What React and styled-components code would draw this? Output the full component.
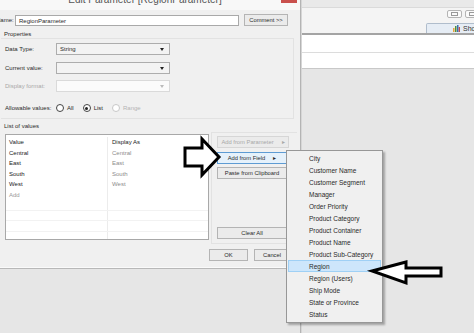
import styled, { createGlobalStyle } from "styled-components";

const Global = createGlobalStyle`
body{
    margin:0;
    background:#e6e6e6;
    font-family:"Liberation Sans", Arial, sans-serif;
}
`

const Page = styled.div`
position:relative;
display:flex;
width:474px;
height:333px;
overflow:hidden;
background:#e6e6e6;
`
const LeftCol = styled.div`
width:300px;
display:flex;
flex-direction:column;
border-right:1px solid #b4b4b4;
box-shadow:1px 0 0 #d6d6d6;
`
const Dialog = styled.div`
height:268px;
background:#f0f0f0;
border-bottom:1px solid #b8b8b8;
box-shadow:0 -4px 0 -3px #fafafa inset;
display:flex;
flex-direction:column;
font-size:6px;
color:#2a2a2a;
`
const TitleBar = styled.div`
position:relative;
height:10px;
background:#f8f8f8;
overflow:hidden;
display:flex;
justify-content:center;
span{
    margin-top:-6px;
    margin-right:10px;
    font-size:10px;
    line-height:12px;
    color:#555;
}
`
const CloseBtn = styled.div`
position:absolute;
right:3px;
top:0;
width:16px;
height:3px;
background:#c9504d;
`
const NameRow = styled.div`
display:flex;
align-items:center;
height:12px;
margin-top:4px;
label{
    width:19px;
    margin-left:-4px;
}
`
const TextInput = styled.div`
width:224px;
height:11px;
background:#fff;
border:1px solid #a9a9a9;
box-sizing:border-box;
padding-left:3px;
line-height:10px;
`
const Button = styled.div`
box-sizing:border-box;
width:${p => p.w || 71}px;
height:12px;
display:flex;
align-items:center;
justify-content:center;
gap:8px;
background:${p => p.hot ? "#e5f1fb" : "#ebebeb"};
border:1px solid ${p => p.hot ? "#5d9bd3" : p.off ? "#d6d6d6" : "#b4b4b4"};
color:${p => p.off ? "#a8a8a8" : "#2a2a2a"};
font-size:5.8px;
white-space:nowrap;
`
const GroupLabel = styled.div`
height:8px;
line-height:8px;
padding-left:4px;
margin-top:${p => p.mt}px;
`
const PropsBox = styled.div`
margin:0 6px 0 1px;
height:81px;
box-sizing:border-box;
border:1px solid #e2e2e2;
border-left:none;
padding:4px 0 0 4px;
display:flex;
flex-direction:column;
gap:6.5px;
`
const FieldRow = styled.div`
display:flex;
align-items:center;
height:12px;
margin-top:${p => p.mt || 0}px;
color:${p => p.off ? "#a8a8a8" : "#2a2a2a"};
label{ width:51px; }
`
const Select = styled.div`
position:relative;
box-sizing:border-box;
width:114px;
height:12px;
background:${p => p.off ? "#fbfbfb" : "#f3f3f3"};
border:1px solid ${p => p.off ? "#dadada" : "#adadad"};
padding-left:3px;
line-height:10px;
color:#2a2a2a;
&::after{
    content:"";
    position:absolute;
    right:5px;
    top:4px;
    border-left:2px solid transparent;
    border-right:2px solid transparent;
    border-top:3px solid ${p => p.off ? "#bbb" : "#222"};
}
`
const Radio = styled.span`
display:inline-flex;
align-items:center;
gap:3px;
margin-right:9px;
color:${p => p.off ? "#b4b4b4" : "#2a2a2a"};
i{
    width:6px;
    height:6px;
    border-radius:50%;
    border:1px solid ${p => p.off ? "#c8c8c8" : "#444"};
    background:#fff;
    display:flex;
    align-items:center;
    justify-content:center;
}
i b{
    width:3px;
    height:3px;
    border-radius:50%;
    background:#222;
}
`
const ListArea = styled.div`
display:flex;
margin-top:2px;
height:112px;
`
const ListBox = styled.div`
margin:2px 0 0 5px;
width:204px;
height:106px;
box-sizing:border-box;
background:#fff;
border:1px solid #a8a8a8;
padding-top:2px;
overflow:hidden;
`
const ListRow = styled.div`
display:grid;
grid-template-columns:101px 1fr;
height:10.5px;
line-height:10.5px;
box-sizing:border-box;
border-bottom:1px solid ${p => p.empty ? "#f2f2f2" : "transparent"};
span{ padding-left:3px; color:${p => p.dim ? "#9a9a9a" : "#1a1a1a"}; }
span + span{ border-left:1px solid #ececec; padding-left:4px; color:${p => p.head ? "#1a1a1a" : "#8c8c8c"}; }
`
const SidePanel = styled.div`
margin-left:2px;
width:86px;
box-sizing:border-box;
border:1px solid #e2e2e2;
border-right:none;
padding:3px 0 0 5px;
display:flex;
flex-direction:column;
gap:3.5px;
`
const Footer = styled.div`
display:flex;
justify-content:flex-end;
gap:6px;
margin-top:5px;
padding-right:10px;
`
const RightPane = styled.div`
flex:1;
display:flex;
flex-direction:column;
margin-left:1px;
`
const TopStrip = styled.div`
height:7px;
background:#e9e9e9;
border-bottom:1px solid #dadada;
`
const ToolArea = styled.div`
height:25px;
background:#f4f4f4;
border-bottom:2px solid #a4a4a4;
display:flex;
flex-direction:column;
align-items:flex-end;
`
const MiniBtns = styled.div`
display:flex;
gap:3px;
margin:2px -6px 0 0;
div{
    width:13px;
    height:6px;
    border:1px solid #b4b4b4;
    border-radius:2px;
    background:#fafafa;
    display:flex;
    align-items:center;
    justify-content:center;
}
div b{
    width:5px;
    height:2px;
    border:1px solid #999;
}
`
const Tab = styled.div`
margin:5px -12px 0 0;
width:60px;
height:12px;
box-sizing:border-box;
background:#e6edf5;
border:1px solid #b0bdcc;
border-bottom:none;
border-radius:2px 2px 0 0;
display:flex;
align-items:center;
gap:3px;
padding-left:26px;
font-size:7px;
color:#333;
`
const WhiteRow = styled.div`
height:${p => p.h}px;
background:#fff;
border-bottom:1px solid ${p => p.line};
`
const Menu = styled.div`
position:absolute;
left:286px;
top:150px;
width:97px;
box-sizing:border-box;
padding:1px 1px 2px;
background:#f0f0f0;
border:1px solid #979797;
box-shadow:2px 2px 2px rgba(0,0,0,0.3);
font-size:6.5px;
color:#2a2a2a;
`
const MenuItem = styled.div`
height:12px;
line-height:11px;
box-sizing:border-box;
padding-left:20px;
background:${p => p.sel ? "#cde6fb" : "transparent"};
border:1px solid ${p => p.sel ? "#9fd0f5" : "transparent"};
`
const Overlay = styled.svg`
position:absolute;
left:0;
top:0;
pointer-events:none;
`

const fields = ["City","Customer Name","Customer Segment","Manager","Order Priority","Product Category","Product Container","Product Name","Product Sub-Category","Region","Region (Users)","Ship Mode","State or Province","Status"]
const values = ["Central","East","South","West"]

const App = () => {
    return (
        <Page>
            <Global />
            <LeftCol>
                <Dialog>
                    <TitleBar>
                        <span>Edit Parameter [RegionParameter]</span>
                        <CloseBtn />
                    </TitleBar>
                    <NameRow>
                        <label>Name:</label>
                        <TextInput>RegionParameter</TextInput>
                        <div style={{ width: 5 }} />
                        <Button w={44}>Comment &gt;&gt;</Button>
                    </NameRow>
                    <GroupLabel mt={4}>Properties</GroupLabel>
                    <PropsBox>
                        <FieldRow><label>Data Type:</label><Select>String</Select></FieldRow>
                        <FieldRow><label>Current value:</label><Select /></FieldRow>
                        <FieldRow off><label>Display format:</label><Select off /></FieldRow>
                        <FieldRow mt={3.5}>
                            <label>Allowable values:</label>
                            <Radio><i /> All</Radio>
                            <Radio><i><b /></i> List</Radio>
                            <Radio off><i /> Range</Radio>
                        </FieldRow>
                    </PropsBox>
                    <GroupLabel mt={3}>List of values</GroupLabel>
                    <ListArea>
                        <ListBox>
                            <ListRow head><span>Value</span><span>Display As</span></ListRow>
                            {values.map(v => <ListRow key={v}><span>{v}</span><span>{v}</span></ListRow>)}
                            <ListRow dim><span>Add</span><span /></ListRow>
                            {[0,1,2,3].map(i => <ListRow key={i} empty><span /><span /></ListRow>)}
                        </ListBox>
                        <SidePanel>
                            <Button off w={72}>Add from Parameter <span>▸</span></Button>
                            <Button hot w={70}>Add from Field <span>▸</span></Button>
                            <Button w={70}>Paste from Clipboard</Button>
                            <div style={{ flex: 1 }} />
                            <Button w={70} style={{ marginBottom: 4 }}>Clear All</Button>
                        </SidePanel>
                    </ListArea>
                    <Footer>
                        <Button w={39}>OK</Button>
                        <Button w={36}>Cancel</Button>
                    </Footer>
                </Dialog>
            </LeftCol>
            <RightPane>
                <TopStrip />
                <ToolArea>
                    <MiniBtns><div><b /></div><div><b /></div></MiniBtns>
                    <Tab>
                        <svg width="7" height="7" viewBox="0 0 7 7">
                            <rect x="0" y="3" width="1.5" height="4" fill="#e8a33c" />
                            <rect x="2" y="1" width="1.5" height="6" fill="#4f8f3a" />
                            <rect x="4" y="0" width="1.5" height="7" fill="#3a6fb0" />
                            <rect x="5.7" y="2" width="1.3" height="5" fill="#c0504d" />
                        </svg>
                        Sho
                    </Tab>
                </ToolArea>
                <WhiteRow h={17} line="#dcdcdc" />
                <WhiteRow h={15} line="#c8c8c8" />
            </RightPane>
            <Menu>
                {fields.map(f => <MenuItem key={f} sel={f === "Region"}>{f}</MenuItem>)}
            </Menu>
            <Overlay width="474" height="333">
                <polygon points="185,148 202,148 202,139 219,157 202,175 202,166 185,166" fill="#fff" stroke="#000" strokeWidth="3" strokeLinejoin="miter" />
                <polygon points="372,271 406,262 406,268 441,268 441,276 406,276 406,283" fill="#fff" stroke="#000" strokeWidth="3" strokeLinejoin="miter" />
            </Overlay>
        </Page>
    )
}
export default App;
